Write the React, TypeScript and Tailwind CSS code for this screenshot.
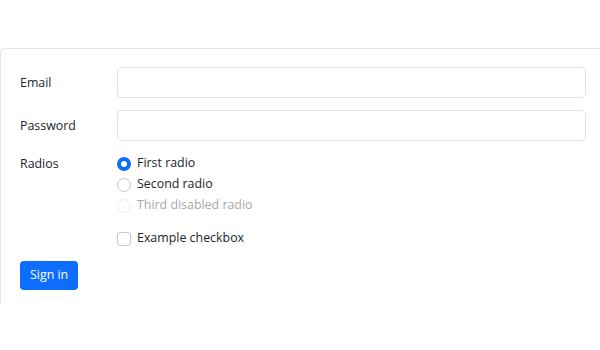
import React from 'react';

const Radio = ({ label, checked = false, disabled = false }: { label: string; checked?: boolean; disabled?: boolean }) => (
    <label className={`flex items-center gap-[6px] h-[21px] ${disabled ? 'text-[#a6a8aa]' : 'text-[#212529]'}`}>
        {checked ? (
            <span className="w-[14px] h-[14px] rounded-full bg-[#0d6efd] flex items-center justify-center">
                <span className="w-[6px] h-[6px] rounded-full bg-white" />
            </span>
        ) : (
            <span className={`w-[14px] h-[14px] rounded-full border ${disabled ? 'border-[#ebeced]' : 'border-[#c7c9cc]'} bg-white`} />
        )}
        <span>{label}</span>
    </label>
);

const App = () => {
    return (
        <div className="w-[600px] h-[350px] bg-white pt-[48px] overflow-hidden" style={{ fontFamily: '"Open Sans", "Noto Sans", sans-serif' }}>
            <div className="h-[256px] border-l border-t border-[#e6e7e8] rounded-tl-[4px] pl-[19px] pr-[14px] pt-[18px] text-[12.4px] text-[#212529]">
                {/* Email */}
                <div className="flex items-center h-[31px]">
                    <div className="w-[97px] pt-[1px]">Email</div>
                    <div className="flex-1 h-[31px] border border-[#dee2e6] rounded-[4px] bg-white" />
                </div>
                {/* Password */}
                <div className="flex items-center h-[31px] mt-[12px]">
                    <div className="w-[97px] pt-[1px]">Password</div>
                    <div className="flex-1 h-[31px] border border-[#dee2e6] rounded-[4px] bg-white" />
                </div>
                {/* Radios */}
                <div className="flex mt-[12px]">
                    <div className="w-[97px] leading-[21px]">Radios</div>
                    <div className="flex flex-col">
                        <Radio label="First radio" checked />
                        <Radio label="Second radio" />
                        <Radio label="Third disabled radio" disabled />
                    </div>
                </div>
                {/* Checkbox */}
                <div className="flex mt-[12px] pl-[97px]">
                    <label className="flex items-center gap-[6px] h-[21px]">
                        <span className="w-[14px] h-[14px] rounded-[3px] border border-[#c7c9cc] bg-white" />
                        <span>Example checkbox</span>
                    </label>
                </div>
                {/* Submit */}
                <button className="mt-[12px] h-[29px] px-[10px] rounded-[4px] bg-[#0d6efd] text-white text-[12.4px]">
                    Sign in
                </button>
            </div>
        </div>
    );
};

export default App;
